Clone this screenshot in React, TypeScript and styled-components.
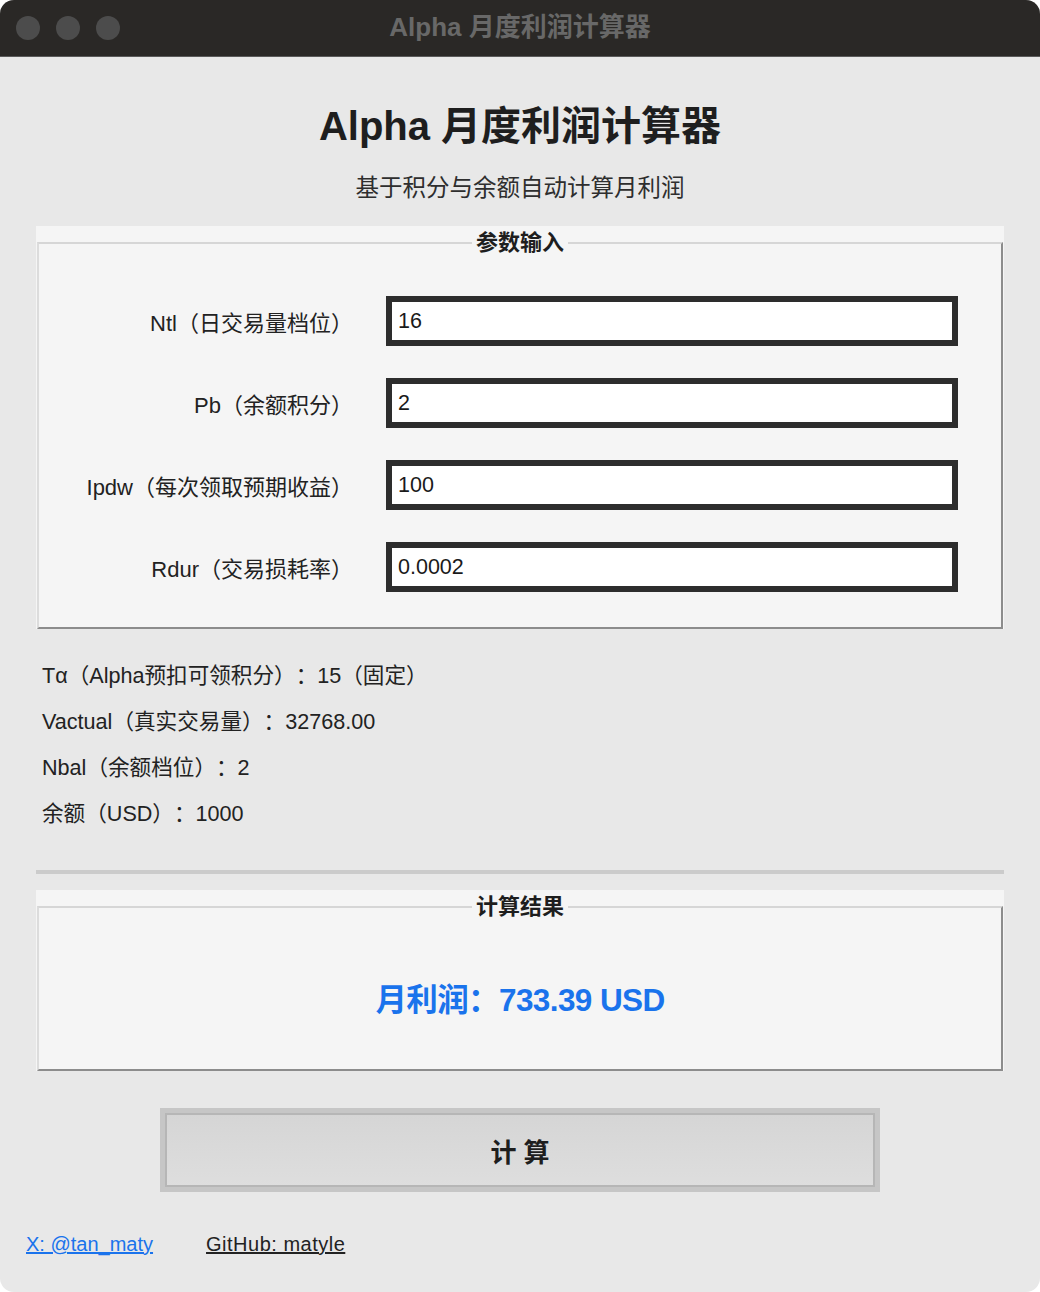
import React from "react";
import styled, { createGlobalStyle } from "styled-components";

const FONT = `"Liberation Sans", "Noto Sans CJK SC", sans-serif`;

const GlobalStyle = createGlobalStyle`
    html, body {
        margin: 0;
        padding: 0;
        background: #ffffff;
    }
    body {
        font-family: ${FONT};
        text-spacing-trim: space-all;
    }
`;

// =============================================================================
// WINDOW
// =============================================================================
const Window = styled.div`
    width: 1040px;
    height: 1292px;
    border-radius: 14px;
    overflow: hidden;
    background: #e8e8e8;
    display: flex;
    flex-direction: column;
`;

const TitleBar = styled.div`
    height: 56px;
    flex-shrink: 0;
    background: #2a2826;
    border-bottom: 1px solid #5a5a5a;
    display: flex;
    align-items: center;
    position: relative;
`;

const Lights = styled.div`
    display: flex;
    gap: 16px;
    padding-left: 16px;
`;

const Light = styled.span`
    width: 24px;
    height: 24px;
    border-radius: 50%;
    background: #4c4c4c;
`;

const WindowTitle = styled.div`
    position: absolute;
    left: 0;
    right: 0;
    top: 10px;
    text-align: center;
    font-size: 26px;
    line-height: 34px;
    font-weight: bold;
    color: #686868;
    pointer-events: none;
`;

const Content = styled.div`
    padding: 0 36px;
    display: flex;
    flex-direction: column;
`;

const Heading = styled.h1`
    margin: 43px 0 0;
    font-size: 40px;
    line-height: 52px;
    font-weight: bold;
    text-align: center;
    color: #1e1e1e;
`;

const Subtitle = styled.p`
    margin: 21px 0 0;
    font-size: 23.5px;
    line-height: 30px;
    text-align: center;
    color: #2e2e2e;
`;

// =============================================================================
// GROUP FRAME
// =============================================================================
const Group = styled.section<{ $top: number }>`
    margin-top: ${(p) => p.$top}px;
    background: #f5f5f5;
    padding-top: 16px;
`;

const Frame = styled.div<{ $height?: number }>`
    position: relative;
    margin: 0 1px;
    background: #f5f5f5;
    border-top: 2px solid #d6d6d6;
    border-left: 2px solid #dcdcdc;
    border-right: 2px solid #8c8c8c;
    border-bottom: 2px solid #8c8c8c;
    ${(p) => (p.$height ? `height: ${p.$height}px;` : "")}
`;

const Legend = styled.span`
    position: absolute;
    top: -14px;
    left: 50%;
    transform: translateX(-50%);
    padding: 0 4px;
    background: #f5f5f5;
    font-size: 22px;
    line-height: 26px;
    font-weight: bold;
    color: #1e1e1e;
    white-space: nowrap;
`;

const FieldGrid = styled.div`
    display: grid;
    grid-template-columns: 314px 572px;
    column-gap: 33px;
    row-gap: 32px;
    padding: 52px 0 35px;
    align-items: center;
`;

const FieldLabel = styled.label`
    text-align: right;
    font-size: 22px;
    color: #222222;
    white-space: nowrap;
`;

const FieldInput = styled.input`
    box-sizing: border-box;
    height: 50px;
    width: 100%;
    border: 6px solid #2d2d2d;
    background: #ffffff;
    padding: 0 6px;
    font-family: ${FONT};
    font-size: 21.5px;
    color: #1a1a1a;
    outline: none;
`;

// =============================================================================
// INFO & RESULT
// =============================================================================
const InfoList = styled.div`
    margin-top: 24px;
    padding-left: 6px;
    display: flex;
    flex-direction: column;
`;

const InfoLine = styled.div`
    font-size: 21.6px;
    line-height: 46px;
    color: #222222;
    white-space: nowrap;
`;

const Divider = styled.hr`
    margin: 33px 0 0;
    border: none;
    height: 4px;
    background: #cbcbcb;
`;

const ResultBody = styled.div`
    height: 100%;
    display: flex;
    align-items: center;
    justify-content: center;
    padding-top: 16px;
    box-sizing: border-box;
`;

const ResultText = styled.div`
    font-size: 31.5px;
    font-weight: bold;
    color: #1a73ec;
    letter-spacing: -0.6px;
`;

const CalcButton = styled.button`
    margin: 37px auto 0;
    width: 720px;
    height: 84px;
    box-sizing: border-box;
    border: 5px solid #c6c6c6;
    box-shadow: inset 0 0 0 2px #b6b6b6;
    background: linear-gradient(#d5d5d5, #dedede);
    font-family: ${FONT};
    font-size: 26px;
    font-weight: bold;
    color: #1e1e1e;
    cursor: pointer;
`;

const Footer = styled.div`
    display: flex;
    gap: 53px;
    margin-top: 40px;
    padding-left: 26px;
`;

const FooterLink = styled.a<{ $accent?: boolean }>`
    font-size: 20px;
    line-height: 24px;
    color: ${(p) => (p.$accent ? "#1a73ec" : "#222222")};
    text-decoration: underline;
    letter-spacing: ${(p) => (p.$accent ? "0" : "0.5px")};
`;

// =============================================================================
// DATA
// =============================================================================
const fields = [
    { label: "Ntl（日交易量档位）", value: "16" },
    { label: "Pb（余额积分）", value: "2" },
    { label: "Ipdw（每次领取预期收益）", value: "100" },
    { label: "Rdur（交易损耗率）", value: "0.0002" },
];

const infos = [
    "Tα（Alpha预扣可领积分）：15（固定）",
    "Vactual（真实交易量）：32768.00",
    "Nbal（余额档位）：2",
    "余额（USD）：1000",
];

export default function App(): JSX.Element {
    return (
        <>
            <GlobalStyle />
            <Window>
                <TitleBar>
                    <Lights>
                        <Light />
                        <Light />
                        <Light />
                    </Lights>
                    <WindowTitle>Alpha 月度利润计算器</WindowTitle>
                </TitleBar>
                <Content>
                    <Heading>Alpha 月度利润计算器</Heading>
                    <Subtitle>基于积分与余额自动计算月利润</Subtitle>

                    <Group $top={23}>
                        <Frame>
                            <Legend>参数输入</Legend>
                            <FieldGrid>
                                {fields.map((f) => (
                                    <React.Fragment key={f.label}>
                                        <FieldLabel>{f.label}</FieldLabel>
                                        <FieldInput defaultValue={f.value} />
                                    </React.Fragment>
                                ))}
                            </FieldGrid>
                        </Frame>
                    </Group>

                    <InfoList>
                        {infos.map((t) => (
                            <InfoLine key={t}>{t}</InfoLine>
                        ))}
                    </InfoList>

                    <Divider />

                    <Group $top={16}>
                        <Frame $height={161}>
                            <Legend>计算结果</Legend>
                            <ResultBody>
                                <ResultText>月利润：733.39 USD</ResultText>
                            </ResultBody>
                        </Frame>
                    </Group>

                    <CalcButton>计 算</CalcButton>
                </Content>
                <Footer>
                    <FooterLink $accent href="#">
                        X: @tan_maty
                    </FooterLink>
                    <FooterLink href="#">GitHub: matyle</FooterLink>
                </Footer>
            </Window>
        </>
    );
}
